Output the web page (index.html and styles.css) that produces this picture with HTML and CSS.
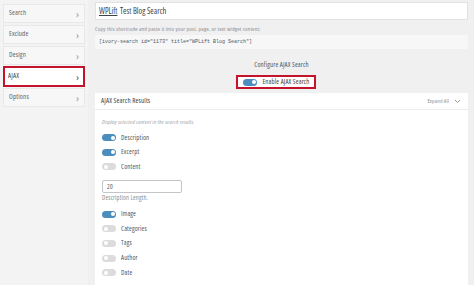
FILE: index.html
```html
<!DOCTYPE html>
<html lang="en">
<head>
  <meta charset="UTF-8" />
  <title>AJAX Search Settings</title>
  <link rel="stylesheet" href="styles.css">
</head>
<body>

  <div class="wrap">
    <div class="sidebar">
      <div class="tab">Search <span class="chev">&#8250;</span></div>
      <div class="tab">Exclude <span class="chev">&#8250;</span></div>
      <div class="tab">Design <span class="chev">&#8250;</span></div>
      <div class="tab active">AJAX <span class="chev">&#8250;</span></div>
      <div class="tab">Options <span class="chev">&#8250;</span></div>
    </div>

    <div class="main">
      <div class="title-input"><span class="spell">WPLift</span> Test Blog Search</div>
      <p class="hint">Copy this shortcode and paste it into your post, page, or text widget content:</p>
      <div class="shortcode">[ivory-search id="1173" title="WPLift Blog Search"]</div>

      <p class="configure">Configure AJAX Search</p>
      <div class="enable-row">
        <div class="enable-box">
          <span class="toggle on"></span>
          Enable AJAX Search
        </div>
      </div>

      <div class="panel">
        <div class="panel-head">
          <span>AJAX Search Results</span>
          <span class="expand">Expand All
            <svg width="7" height="5" viewBox="0 0 7 5"><path d="M1 1 L3.5 3.5 L6 1" fill="none" stroke="#999" stroke-width="1"/></svg>
          </span>
        </div>
        <div class="panel-body">
          <p class="note">Display selected content in the search results.</p>
          <div class="opt"><span class="toggle on"></span>Description</div>
          <div class="opt"><span class="toggle on"></span>Excerpt</div>
          <div class="opt"><span class="toggle"></span>Content</div>
          <div class="num-input">20</div>
          <p class="num-label">Description Length.</p>
          <div class="opt"><span class="toggle on"></span>Image</div>
          <div class="opt"><span class="toggle"></span>Categories</div>
          <div class="opt"><span class="toggle"></span>Tags</div>
          <div class="opt"><span class="toggle"></span>Author</div>
          <div class="opt"><span class="toggle"></span>Date</div>
        </div>
      </div>
    </div>
  </div>

</body>
</html>
```

FILE: styles.css
```css
* {
  box-sizing: border-box;
}

body {
  margin: 0;
  background: #f0f0f1;
  font-family: 'Open Sans', 'Noto Sans', sans-serif;
  font-stretch: 86%;
  font-size: 7px;
  line-height: 1.2;
  letter-spacing: 0.15px;
  color: #50575e;
}

.wrap {
  display: flex;
  height: 285px;
  overflow: hidden;
}

.sidebar {
  width: 88px;
  padding: 4px 3px 0 3px;
  background: #f3f3f3;
  display: flex;
  flex-direction: column;
  gap: 2px;
}

.tab {
  height: 19px;
  display: flex;
  align-items: center;
  justify-content: space-between;
  padding: 0 5px;
  background: #f7f7f7;
  border: 1px solid #e8e8e8;
  font-size: 7px;
  color: #5f6468;
}

.tab.active {
  background: #fff;
  border: 2px solid #c4142c;
  padding: 0 4px 0 3px;
  height: 21px;
  margin: -1px 0;
  color: #3c434a;
}

.chev {
  font-size: 11px;
  color: #999;
  line-height: 1;
}

.tab.active .chev {
  color: #555;
}

.main {
  flex: 1;
  padding: 2px 6px 0 7px;
}

.title-input {
  height: 18px;
  background: #fff;
  border: 1px solid #e2e2e2;
  padding: 0 3px;
  display: flex;
  align-items: center;
  font-size: 8.3px;
  letter-spacing: 0;
  color: #3c434a;
}

.spell {
  text-decoration: underline;
  margin-right: 2.5px;
}

.hint {
  margin: 6px 0 2px 0;
  font-size: 5.9px;
  color: #8a8f94;
}

.shortcode {
  height: 14px;
  background: #f7f7f7;
  padding: 0 4px;
  display: flex;
  align-items: center;
  font-family: 'Liberation Mono', monospace;
  font-size: 5px;
  letter-spacing: 0;
  color: #50575e;
}

.configure {
  margin: 12px 0 0 0;
  text-align: center;
  font-size: 6.8px;
  color: #50575e;
}

.enable-row {
  display: flex;
  justify-content: center;
  margin-top: 6px;
  padding-right: 11px;
}

.enable-box {
  height: 14px;
  border: 2px solid #c4142c;
  background: #fff;
  display: flex;
  align-items: center;
  gap: 5px;
  padding: 0 4px 0 5px;
  font-size: 6.8px;
  white-space: nowrap;
  color: #3c434a;
}

.toggle {
  display: inline-block;
  position: relative;
  width: 14px;
  height: 7px;
  border-radius: 4px;
  background: #dcdcde;
  flex-shrink: 0;
}

.toggle::after {
  content: "";
  position: absolute;
  top: 1.5px;
  left: 1.5px;
  width: 4px;
  height: 4px;
  border-radius: 50%;
  background: #fff;
}

.toggle.on {
  background: #4c8dbe;
}

.toggle.on::after {
  left: auto;
  right: 1.5px;
}

.panel {
  margin-top: 4px;
  background: #fff;
  height: 200px;
}

.panel-head {
  height: 17px;
  border-bottom: 1px solid #ececec;
  display: flex;
  align-items: center;
  justify-content: space-between;
  padding: 0 7px 0 6px;
  font-size: 7px;
  color: #3c434a;
}

.expand {
  display: flex;
  align-items: center;
  gap: 5px;
  font-size: 5.6px;
  color: #8a8f94;
}

.panel-body {
  padding: 9px 7px;
}

.note {
  margin: 0 0 4px 0;
  font-style: italic;
  font-size: 6px;
  color: #a0a5aa;
}

.opt {
  height: 14.6px;
  display: flex;
  align-items: center;
  gap: 5px;
  font-size: 6.8px;
  color: #50575e;
}

.num-input {
  width: 80px;
  height: 13px;
  margin-top: 6px;
  border: 1px solid #c3c4c7;
  border-radius: 2px;
  padding: 0 4px;
  display: flex;
  align-items: center;
  font-size: 6.5px;
}

.num-label {
  margin: 1px 0 5px 0;
  font-size: 6.5px;
  color: #8a8f94;
}
```
